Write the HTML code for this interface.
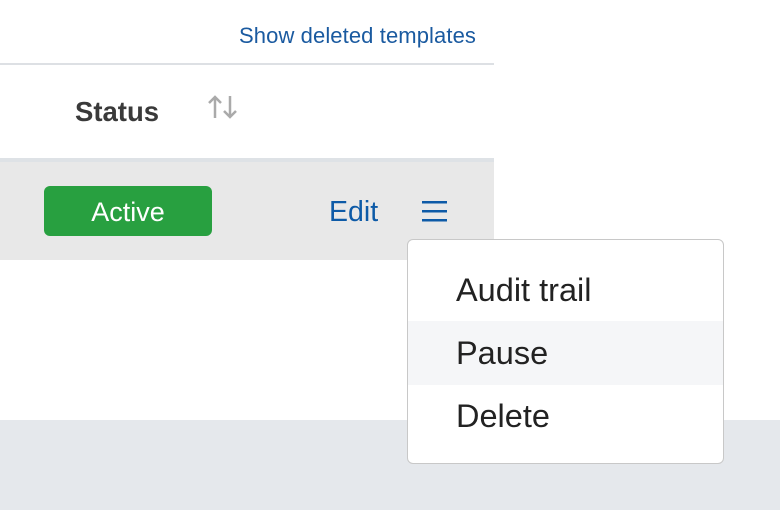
<!DOCTYPE html>
<html><head><style>
body{margin:0;width:780px;height:510px;position:relative;overflow:hidden;background:#fff;font-family:"Liberation Sans",sans-serif}
.a{position:absolute;white-space:nowrap}
</style></head><body>
<div class="a" style="left:0;top:420px;width:780px;height:90px;background:#e5e8ec"></div>
<div class="a" style="left:239px;top:23px;font-size:22px;color:#1a5aa0;letter-spacing:0.1px">Show deleted templates</div>
<div class="a" style="left:0;top:63px;width:494px;height:2px;background:#dde0e4"></div>
<div class="a" style="left:75px;top:96px;font-size:27.5px;font-weight:bold;color:#3a3a3a">Status</div>
<svg class="a" style="left:206px;top:93px" width="34" height="28" viewBox="0 0 34 28"><g stroke="#aaa" stroke-width="2.5" fill="none"><path d="M9 4V25M3 10L9 4L15 10"/><path d="M24 3V24M18 18L24 24L30 18"/></g></svg>
<div class="a" style="left:0;top:158px;width:494px;height:4px;background:#dee2e6"></div>
<div class="a" style="left:0;top:162px;width:494px;height:98px;background:#e8e8e8"></div>
<div class="a" style="left:44px;top:186px;width:168px;height:50px;background:#28a040;border-radius:6px;color:#fff;font-size:27px;text-align:center;line-height:52px">Active</div>
<div class="a" style="left:329px;top:196px;font-size:28.5px;color:#0d5aa7">Edit</div>
<svg class="a" style="left:422px;top:200px" width="26" height="22"><g fill="#0d5aa7"><rect x="0" y="1" width="25" height="2.5"/><rect x="0" y="10" width="25" height="2.5"/><rect x="0" y="19" width="25" height="2.5"/></g></svg>
<div class="a" style="left:407px;top:239px;width:315px;height:223px;border:1.5px solid #c8c8c8;border-radius:6px;background:#fff;overflow:hidden">
<div style="position:absolute;left:0;top:81px;width:100%;height:64px;background:#f5f6f8"></div>
<div style="position:absolute;left:48px;top:32px;font-size:32.5px;color:#222">Audit trail</div>
<div style="position:absolute;left:48px;top:95px;font-size:32.5px;color:#222">Pause</div>
<div style="position:absolute;left:48px;top:158px;font-size:32.5px;color:#222">Delete</div>
</div>
</body></html>
